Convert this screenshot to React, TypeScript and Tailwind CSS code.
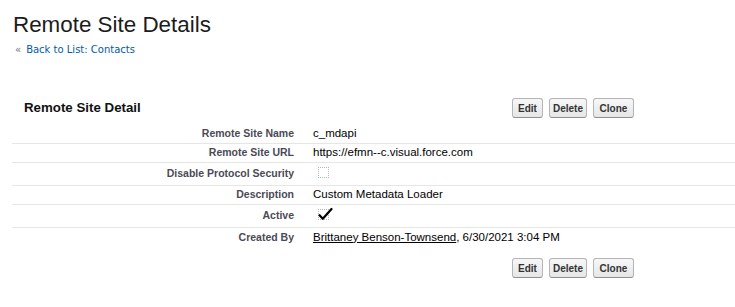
import React from 'react';

const rows: { label: string; kind: 'text' | 'unchecked' | 'checked' | 'owner'; value?: string }[] = [
  { label: 'Remote Site Name', kind: 'text', value: 'c_mdapi' },
  { label: 'Remote Site URL', kind: 'text', value: 'https://efmn--c.visual.force.com' },
  { label: 'Disable Protocol Security', kind: 'unchecked' },
  { label: 'Description', kind: 'text', value: 'Custom Metadata Loader' },
  { label: 'Active', kind: 'checked' },
  { label: 'Created By', kind: 'owner' },
];

function Checkbox({ checked }: { checked?: boolean }) {
  return (
    <span className="relative ml-[5px] inline-block h-[11px] w-[11px] translate-y-[1px] border border-dotted border-[#b8b8b8]">
      {checked && (
        <svg className="absolute -left-[1px] -top-[3px] h-[15px] w-[15px]" viewBox="0 0 15 15">
          <path d="M1.5 8.2 L4.8 11.8 L13.5 2" fill="none" stroke="#000" strokeWidth="2.2" strokeLinecap="round" strokeLinejoin="round" />
        </svg>
      )}
    </span>
  );
}

function ButtonGroup() {
  const btn =
    'h-[20px] rounded-[3px] border border-[#b5b5b5] border-b-[#8f8f8f] bg-gradient-to-b from-[#f7f7f7] to-[#e6e6e6] text-[10px] font-bold text-[#333] flex items-center justify-center';
  return (
    <div className="flex gap-[6px]">
      <button className={`${btn} w-[31px]`}>Edit</button>
      <button className={`${btn} w-[38px]`}>Delete</button>
      <button className={`${btn} w-[41px]`}>Clone</button>
    </div>
  );
}

export default function App() {
  return (
    <div className="min-h-[307px] w-[735px] bg-white font-['Liberation_Sans',Arial,sans-serif] text-black">
      <div className="pl-[13px] pt-[11px]">
        <h1 className="text-[22.4px] leading-[28px] font-normal text-[#1c1c1c]">Remote Site Details</h1>
        <div className="mt-[4px] flex items-center font-['DejaVu_Sans',Verdana,sans-serif] text-[10px] leading-[14px]">
          <span className="ml-[2px] mr-[5px] text-[#777]">«</span>
          <a className="text-[#015ba7]">Back to List: Contacts</a>
        </div>
      </div>

      <div className="mt-[37px] pl-[12px]">
        <div className="flex h-[28px] items-center">
          <h2 className="w-[500px] pl-[12px] text-[13.3px] font-bold text-[#111]">Remote Site Detail</h2>
          <ButtonGroup />
        </div>

        <div className="mt-[3px]">
          {rows.map((r, i) => (
            <div
              key={r.label}
              className={`flex items-center ${r.kind === 'unchecked' || r.kind === 'checked' ? 'h-[23px]' : 'h-[19px]'} ${
                i < rows.length - 1 ? 'border-b border-[#e6e6e6]' : ''
              }`}
            >
              <div className="w-[291px] pr-[9px] text-right text-[10.5px] font-bold text-[#4a4a56]">{r.label}</div>
              <div className="pl-[10px] text-[11.5px] text-black">
                {r.kind === 'text' && r.value}
                {r.kind === 'unchecked' && <Checkbox />}
                {r.kind === 'checked' && <Checkbox checked />}
                {r.kind === 'owner' && (
                  <span>
                    <a className="underline">Brittaney Benson-Townsend</a>, 6/30/2021 3:04 PM
                  </span>
                )}
              </div>
            </div>
          ))}
        </div>

        <div className="mt-[11px] flex h-[20px] items-center">
          <div className="w-[500px]" />
          <ButtonGroup />
        </div>
      </div>
    </div>
  );
}
